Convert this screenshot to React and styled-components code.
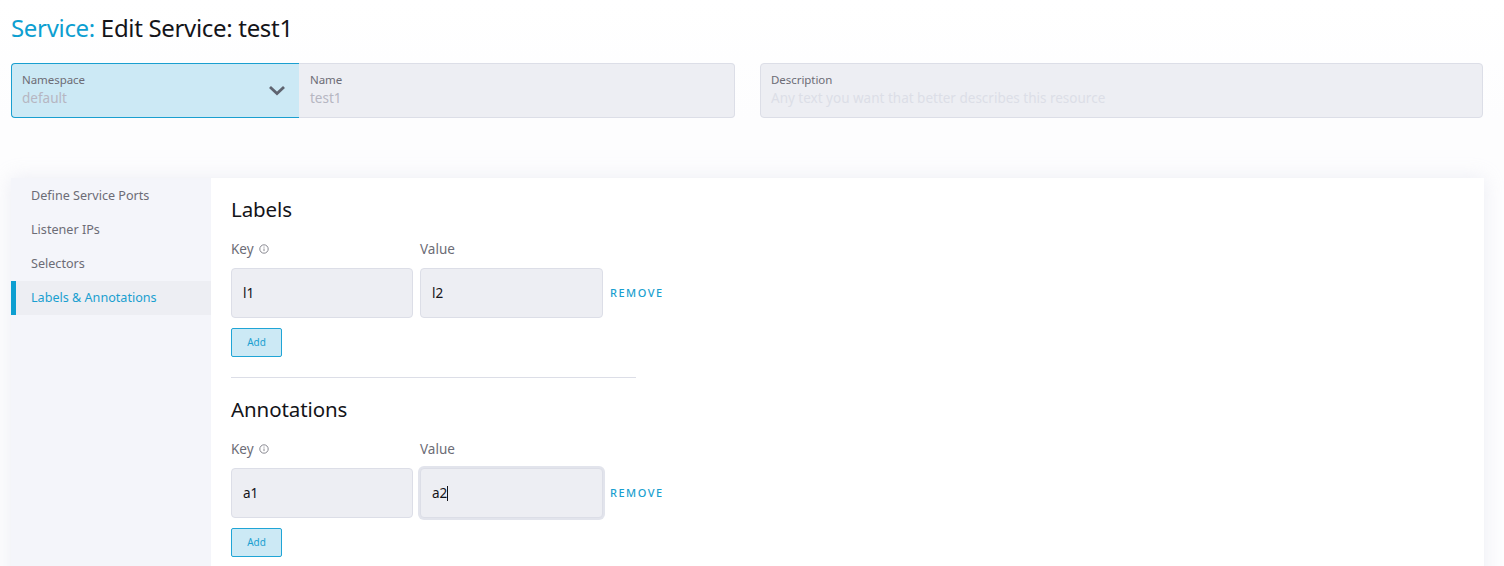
import React from 'react';
import styled, { createGlobalStyle } from 'styled-components';

const Global = createGlobalStyle`
  html, body { margin: 0; padding: 0; height: 566px; overflow: hidden; background: #fff; }
  body { font-family: "Noto Sans", "Open Sans", sans-serif; color: #141419; }
`;

const Page = styled.div`
  height: 566px;
  overflow: hidden;
  box-sizing: border-box;
  padding: 0 20px 0 11px;
  background: linear-gradient(#fff 0, #fdfdfe 120px);
`;

const Title = styled.h1`
  margin: 0;
  height: 63px;
  padding-top: 12px;
  box-sizing: border-box;
  font-size: 24px;
  line-height: 32px;
  font-weight: 400;
  letter-spacing: -0.32px;
`;

const Accent = styled.span`
  color: #0d9fd1;
`;

const TopRow = styled.div`
  display: flex;
  height: 55px;
  margin-bottom: 60px;
`;

const Field = styled.div`
  box-sizing: border-box;
  height: 55px;
  width: ${p => p.$w}px;
  margin-left: ${p => p.$ml || 0}px;
  padding: 8px 10px;
  padding-left: ${p => (p.$joined === 'right' ? 11 : 10)}px;
  background: ${p => (p.$active ? '#cce9f5' : '#edeef3')};
  border: 1px solid ${p => (p.$active ? '#1a9fd0' : '#dcdee7')};
  border-right-width: ${p => (p.$joined === 'left' ? 0 : 1)}px;
  border-left-width: ${p => (p.$joined === 'right' ? 0 : 1)}px;
  border-radius: ${p =>
    p.$joined === 'left' ? '4px 0 0 4px' : p.$joined === 'right' ? '0 4px 4px 0' : '4px'};
  position: relative;
`;

const FieldLabel = styled.div`
  font-size: 11.5px;
  line-height: 16px;
  color: #6c6c76;
  letter-spacing: -0.05px;
`;

const FieldValue = styled.div`
  font-size: 13.5px;
  line-height: 19px;
  margin-top: 1px;
  color: ${p => (p.$faint ? '#dcdee7' : '#b6b6c2')};
`;

const Chevron = styled.svg`
  position: absolute;
  right: 13px;
  top: 20px;
  width: 18px;
  height: 12px;
`;

const Panel = styled.div`
  display: flex;
  height: 420px;
  background: #fff;
  box-shadow: 0 0 18px rgba(195, 198, 218, 0.3);
`;

const Side = styled.nav`
  width: 200px;
  flex: none;
  padding-top: 1px;
  background: #f4f5fa;
`;

const SideItem = styled.div`
  box-sizing: border-box;
  height: 34px;
  line-height: 34px;
  font-size: 12.6px;
  padding-left: ${p => (p.$active ? 15 : 20)}px;
  color: ${p => (p.$active ? '#1a9fd0' : '#6c6c76')};
  background: ${p => (p.$active ? '#edeef3' : 'transparent')};
  border-left: ${p => (p.$active ? '5px solid #0d9fd1' : '0')};
`;

const Main = styled.main`
  padding: 17px 0 0 20px;
  flex: 1;
`;

const Heading = styled.h2`
  margin: 0;
  height: 32px;
  font-size: 20.5px;
  line-height: 28px;
  font-weight: 400;
  letter-spacing: -0.1px;
`;

const Header = styled.div`
  display: flex;
  gap: 7px;
  height: 22px;
  margin-top: 11px;
`;

const Col = styled.div`
  width: ${p => p.$w}px;
  display: flex;
  align-items: center;
  gap: 5px;
  font-size: 13.5px;
  line-height: 22px;
  color: #6c6c76;
`;

const Row = styled.div`
  display: flex;
  align-items: center;
  gap: 7px;
  margin-top: 8px;
`;

const Input = styled.div`
  box-sizing: border-box;
  width: ${p => p.$w}px;
  height: 50px;
  line-height: 48px;
  padding-left: 11px;
  font-size: 13.5px;
  background: #edeef3;
  border: 1px solid #dcdee7;
  border-radius: 4px;
  color: #141419;
  box-shadow: ${p => (p.$focus ? '0 0 0 2px #e2e4ec' : 'none')};
`;

const Caret = styled.span`
  display: inline-block;
  width: 1px;
  height: 15px;
  background: #141419;
  vertical-align: -3px;
`;

const Remove = styled.button`
  border: 0;
  background: none;
  padding: 0 0 2px;
  font: inherit;
  font-size: 11px;
  font-weight: 500;
  letter-spacing: 1.5px;
  color: #1a9fd0;
`;

const AddButton = styled.button`
  display: block;
  box-sizing: border-box;
  width: 51px;
  height: 29px;
  margin-top: 10px;
  padding: 0 0 2px;
  font: inherit;
  font-size: 10px;
  color: #1a9fd0;
  background: #cce9f5;
  border: 1px solid #1fa5d6;
  border-radius: 2px;
`;

const Divider = styled.hr`
  width: 405px;
  margin: 20px 0 17px;
  border: 0;
  border-top: 1px solid #dcdee7;
`;

const InfoIcon = () => (
  <svg width="10" height="10" viewBox="0 0 10 10" fill="none" stroke="#6c6c76" strokeWidth="0.8">
    <circle cx="5" cy="5" r="4.2" />
    <path d="M5 4.5v2.6M5 2.6v1" />
  </svg>
);

const Section = ({ title, k, v, focus }) => (
  <section>
    <Heading>{title}</Heading>
    <Header>
      <Col $w={182}>Key <InfoIcon /></Col>
      <Col $w={183}>Value</Col>
    </Header>
    <Row>
      <Input $w={182}>{k}</Input>
      <Input $w={183} $focus={focus}>{v}{focus && <Caret />}</Input>
      <Remove>REMOVE</Remove>
    </Row>
    <AddButton>Add</AddButton>
  </section>
);

export default function App() {
  return (
    <Page>
      <Global />
      <Title><Accent>Service:</Accent> Edit Service: test1</Title>
      <TopRow>
        <Field $w={288} $active $joined="left">
          <FieldLabel>Namespace</FieldLabel>
          <FieldValue>default</FieldValue>
          <Chevron viewBox="0 0 18 12" fill="none" stroke="#5f6470" strokeWidth="2.8">
            <path d="M2 3l7 6.5 7-6.5" />
          </Chevron>
        </Field>
        <Field $w={436} $joined="right">
          <FieldLabel>Name</FieldLabel>
          <FieldValue>test1</FieldValue>
        </Field>
        <Field $w={723} $ml={25}>
          <FieldLabel>Description</FieldLabel>
          <FieldValue $faint>Any text you want that better describes this resource</FieldValue>
        </Field>
      </TopRow>
      <Panel>
        <Side>
          <SideItem>Define Service Ports</SideItem>
          <SideItem>Listener IPs</SideItem>
          <SideItem>Selectors</SideItem>
          <SideItem $active>Labels &amp; Annotations</SideItem>
        </Side>
        <Main>
          <Section title="Labels" k="l1" v="l2" />
          <Divider />
          <Section title="Annotations" k="a1" v="a2" focus />
        </Main>
      </Panel>
    </Page>
  );
}
